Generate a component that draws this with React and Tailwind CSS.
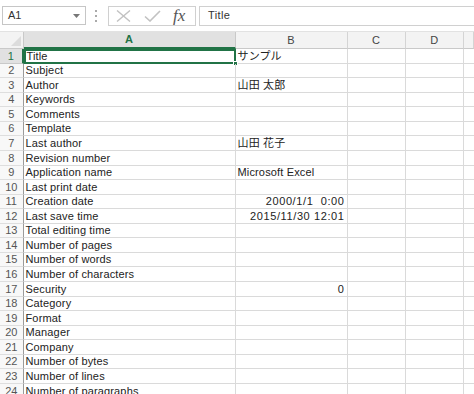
import React from "react";

const rows = [
  ["Title", "サンプル"],
  ["Subject"],
  ["Author", "山田 太郎"],
  ["Keywords"],
  ["Comments"],
  ["Template"],
  ["Last author", "山田 花子"],
  ["Revision number"],
  ["Application name", "Microsoft Excel"],
  ["Last print date"],
  ["Creation date", "2000/1/1  0:00", true],
  ["Last save time", "2015/11/30 12:01", true],
  ["Total editing time"],
  ["Number of pages"],
  ["Number of words"],
  ["Number of characters"],
  ["Security", "0", true],
  ["Category"],
  ["Format"],
  ["Manager"],
  ["Company"],
  ["Number of bytes"],
  ["Number of lines"],
  ["Number of paragraphs"],
];

const font = { fontFamily: '"Liberation Sans", "Noto Sans CJK JP", sans-serif' };

export default function App() {
  return (
    <div className="w-[474px] h-[394px] overflow-hidden bg-white text-[#222]" style={font}>
      {/* Formula bar */}
      <div className="h-[32px] flex items-center border-b border-[#e2e2e2]">
        <div className="ml-[2px] w-[84px] h-[19px] border border-[#c6c6c6] flex items-center justify-between px-[5px]">
          <span className="text-[11px] text-[#333]">A1</span>
          <svg width="7" height="4" viewBox="0 0 7 4">
            <path d="M0 0h7L3.5 4z" fill="#777" />
          </svg>
        </div>
        <div className="ml-[9px] flex flex-col gap-[3px]">
          <span className="w-[2px] h-[2px] bg-[#aaa]" />
          <span className="w-[2px] h-[2px] bg-[#aaa]" />
          <span className="w-[2px] h-[2px] bg-[#aaa]" />
        </div>
        <div className="ml-[11px] w-[88px] h-[20px] border border-[#d0d0d0] flex items-center">
          <svg className="ml-[7px]" width="15" height="12" viewBox="0 0 15 12">
            <path d="M1 0.5L14 11.5M14 0.5L1 11.5" stroke="#c2c2c2" strokeWidth="1.4" fill="none" />
          </svg>
          <svg className="ml-[13px]" width="17" height="12" viewBox="0 0 17 12">
            <path d="M1 6.5L6 11L16 1" stroke="#c2c2c2" strokeWidth="1.6" fill="none" />
          </svg>
          <span
            className="ml-[12px] text-[17px] italic text-[#555] leading-none"
            style={{ fontFamily: '"Liberation Serif", serif' }}
          >
            fx
          </span>
        </div>
        <div className="ml-[3px] flex-1 h-[20px] border border-[#d0d0d0] border-r-0 flex items-center pl-[8px]">
          <span className="text-[11px] tracking-[0.4px] text-[#333]">Title</span>
        </div>
      </div>

      {/* Grid */}
      <div className="grid grid-cols-[23.5px_212px_112px_58px_58.5px_1fr]">
        {/* header row */}
        <div className="h-[17px] bg-[#f3f3f3] border-r border-b border-[#c9c9c9] relative">
          <svg className="absolute right-[2px] bottom-[2px]" width="10" height="10" viewBox="0 0 10 10">
            <path d="M10 0V10H0z" fill="#dcdcdc" />
          </svg>
        </div>
        <div className="h-[17px] bg-[#e1e1e1] border-r border-[#c9c9c9] border-b-2 border-b-[#217346] flex items-center justify-center text-[11px] font-bold text-[#217346]">
          A
        </div>
        {["B", "C", "D", ""].map((c, i) => (
          <div
            key={i}
            className="h-[17px] bg-[#f3f3f3] border-r border-b border-[#d4d4d4] border-b-[#c9c9c9] flex items-center justify-center text-[11px] text-[#444]"
          >
            {c}
          </div>
        ))}

        {rows.map(([label, val, right], i) => {
          const sel = i === 0;
          return (
            <React.Fragment key={i}>
              <div
                className={
                  "h-[14.57px] border-b flex items-end pb-[1px] justify-center text-[11px] leading-none " +
                  (sel
                    ? "bg-[#e1e1e1] text-[#217346] border-r-2 border-r-[#217346] border-b-[#c9c9c9]"
                    : "bg-[#f8f8f8] text-[#555] border-r border-r-[#9b9b9b] border-b-[#dedede]")
                }
              >
                {i + 1}
              </div>
              <div
                className={
                  "h-[14.57px] flex items-end text-[11px] leading-none whitespace-nowrap relative " +
                  (sel
                    ? "border-2 border-[#217346] pl-[1px] pb-0"
                    : "border-r border-b border-[#dadada] pl-[2px] pb-[1px]")
                }
              >
                <span className="tracking-[0.15px]">{label}</span>
                {sel && (
                  <span className="absolute right-[-4px] bottom-[-4px] w-[5px] h-[5px] bg-[#217346] border border-white" />
                )}
              </div>
              <div
                className={
                  "h-[14.57px] border-r border-b border-[#dadada] flex items-end pb-[1px] text-[11px] leading-none whitespace-nowrap px-[2px] " +
                  (right ? "justify-end" : "justify-start")
                }
              >
                <span className={"whitespace-pre " + (right ? "tracking-[0.6px]" : "tracking-[0.15px]")}>
                  {val || ""}
                </span>
              </div>
              <div className="h-[14.57px] border-r border-b border-[#dadada]" />
              <div className="h-[14.57px] border-r border-b border-[#dadada]" />
              <div className="h-[14.57px] border-b border-[#dadada]" />
            </React.Fragment>
          );
        })}
      </div>
    </div>
  );
}
